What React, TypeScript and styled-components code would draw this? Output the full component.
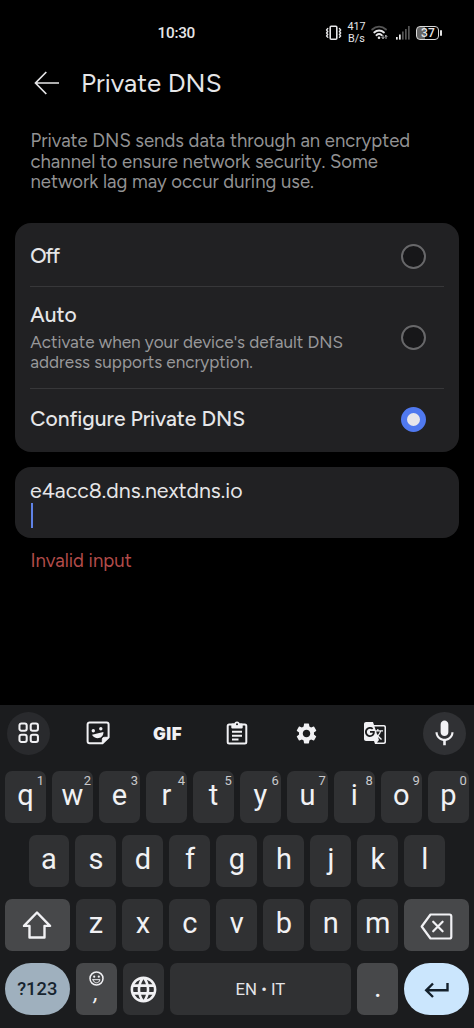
import React from 'react';
import styled, { createGlobalStyle } from 'styled-components';
import { MdGTranslate, MdLanguage, MdMic, MdSettings } from 'react-icons/md';

const Global = createGlobalStyle`
  * { box-sizing: border-box; }
  body { margin: 0; background: #000; }
  svg { display: block; flex: none; }
`;

const ui = `'Figtree', 'Lato', 'Noto Sans', sans-serif`;

const Screen = styled.div`
  width: 474px;
  height: 1028px;
  display: flex;
  flex-direction: column;
  background: #000;
  color: #e6e6e8;
  font-family: ${ui};
  overflow: hidden;
`;

const StatusBar = styled.header`
  height: 60px;
  padding: 5px 32px 0 157.5px;
  display: flex;
  align-items: center;
  font-family: Roboto, sans-serif;
`;

const Clock = styled.span`
  flex: 1;
  font-size: 15.3px;
  font-weight: 500;
  line-height: 20px;
  letter-spacing: -0.25px;
`;

const StatusIcons = styled.div`
  display: flex;
  align-items: center;
`;

const Speed = styled.div`
  width: 18px;
  margin: 0 6px 0 5px;
  font-size: 10.8px;
  line-height: 11.5px;
  text-align: center;
  white-space: nowrap;
`;

const TitleBar = styled.div`
  height: 46px;
  padding-left: 33.5px;
  display: flex;
  align-items: center;
  gap: 21.5px;
`;

const Title = styled.h1`
  margin: 0;
  font-size: 25.8px;
  font-weight: 400;
  line-height: 32px;
  letter-spacing: 0.1px;
`;

const Description = styled.p`
  margin: 25px 0 0 30.5px;
  height: 92px;
  font-size: 18.5px;
  line-height: 20.6px;
  letter-spacing: 0.02px;
  color: #929293;
  white-space: nowrap;
`;

const Card = styled.section`
  margin: 0 15px;
  padding: 0 15px;
  flex: none;
  border-radius: 16px;
  background: #212123;
`;

const Option = styled.div<{ $height: number; $shift?: number }>`
  height: ${p => p.$height}px;
  padding-top: ${p => Math.max(p.$shift || 0, 0)}px;
  padding-bottom: ${p => Math.max(-(p.$shift || 0), 0)}px;
  padding-right: 18px;
  display: flex;
  align-items: center;
  justify-content: space-between;
  & + & { border-top: 1px solid #373739; }
`;

const OptionLabel = styled.div<{ $tight?: boolean }>`
  padding-left: 0.3px;
  font-size: 21px;
  font-weight: 500;
  line-height: 26px;
  letter-spacing: ${p => (p.$tight ? '-1.1px' : 'normal')};
  white-space: nowrap;
`;

const OptionHint = styled.div`
  padding: 4.5px 0 0 0.3px;
  font-size: 17.1px;
  line-height: 19.8px;
  color: #98989a;
  white-space: nowrap;
`;

const Radio = styled.span<{ $on?: boolean }>`
  width: 25px;
  height: 25px;
  flex: none;
  border-radius: 50%;
  border: ${p => (p.$on ? '6.5px solid #5079ef' : '2px solid #68686a')};
  background: ${p => (p.$on ? '#e8e6ea' : '#171719')};
`;

const Field = styled(Card)`
  height: 71px;
  margin-top: 15px;
  padding-top: 11px;
  font-size: 21.3px;
  line-height: 25px;
`;

const Caret = styled.span`
  display: block;
  width: 2px;
  height: 25px;
  margin-left: 0.5px;
  background: #5f82e6;
`;

const ErrorText = styled.p`
  margin: 12px 0 0 30.5px;
  font-size: 18.6px;
  line-height: 22px;
  color: #b34c4a;
`;

const Keyboard = styled.section`
  height: 323px;
  margin-top: auto;
  padding: 6px 5.2px 0 5px;
  flex: none;
  display: flex;
  flex-direction: column;
  gap: 12px;
  background: #1b1c1e;
  color: #f1f1f4;
  font-family: Roboto, sans-serif;
`;

const Toolbar = styled.div`
  height: 48px;
  padding: 0 2.6px 4px 2.4px;
  display: flex;
  align-items: center;
  justify-content: space-between;
`;

const Tool = styled.span<{ $bg?: string }>`
  width: 43px;
  height: 43px;
  border-radius: 50%;
  display: flex;
  align-items: center;
  justify-content: center;
  background: ${p => p.$bg || 'transparent'};
`;

const Gif = styled.span`
  padding-top: 1px;
  font: 900 17px/20px Inter, sans-serif;
  letter-spacing: 0.5px;
`;

const KeyRow = styled.div<{ $inset?: number }>`
  height: 52px;
  padding: 0 ${p => p.$inset || 0}px;
  display: flex;
  gap: 6px;
`;

const Key = styled.div<{ $tone?: string; $width?: number; $pill?: boolean }>`
  position: relative;
  flex: ${p => (p.$width ? `0 0 ${p.$width}px` : '1 1 0')};
  display: flex;
  align-items: center;
  justify-content: center;
  border-radius: ${p => (p.$pill ? 26 : 7)}px;
  background: ${p => p.$tone || '#303133'};
`;

const Letter = styled.span`
  font-size: 29px;
  line-height: 34px;
  padding-bottom: 4px;
`;

const Digit = styled.sup`
  position: absolute;
  top: 3px;
  right: 2px;
  font-size: 13px;
  line-height: 14px;
  color: #c9c9cc;
`;

const KeyLabel = styled.span<{ $dark?: boolean }>`
  font-size: ${p => (p.$dark ? 18.3 : 16.8)}px;
  font-weight: ${p => (p.$dark ? 500 : 400)};
  line-height: 22px;
  color: ${p => (p.$dark ? '#17242f' : '#e4e4e7')};
`;

const Stack = styled.div`
  height: 100%;
  padding-top: 8px;
  display: flex;
  flex-direction: column;
  align-items: center;
`;

const Mark = styled.span`
  font-size: 22px;
  font-style: italic;
  line-height: 14px;
`;

const stroke = { fill: 'none', stroke: 'currentColor', strokeLinecap: 'round', strokeLinejoin: 'round' } as const;

const VibrateIcon = () => (
  <svg width="17" height="16" viewBox="0 0 17 16" {...stroke} strokeWidth="1.3">
    <rect x="5.2" y="1.3" width="6.6" height="13" rx="1" strokeWidth="1.6" />
    <path d="M2.8 3.5 1.5 5l1.3 1.5L1.5 8l1.3 1.5L1.5 11l1.3 1.2M14.4 3.5 15.7 5l-1.3 1.5L15.7 8l-1.3 1.5 1.3 1.5-1.3 1.2" />
  </svg>
);

const WifiIcon = () => (
  <svg width="17" height="15" viewBox="0 0 17 15" {...stroke} strokeWidth="1.8">
    <path d="M1.2 4.5C5.2.6 11 .6 15 4.5" stroke="#555" />
    <path d="M3.2 7.5c2.8-2.7 7-2.7 9.8 0M5.4 10.2c1.6-1.4 3.8-1.4 5.4 0" />
    <circle cx="8" cy="12.8" r="1.3" fill="currentColor" stroke="none" />
    <path d="M12 10.5v3m-1-1 1 1 1-1M15 13.5v-3m-1 1 1-1 1 1" strokeWidth=".8" />
  </svg>
);

const Bars = styled.svg`
  margin: 0 6px 0 8px;
`;

const SignalIcon = () => (
  <Bars width="14" height="14" viewBox="0 0 14 14" fill="#555">
    <rect x="0" y="11" width="1.7" height="2.6" fill="#eee" />
    <rect x="3" y="8.5" width="1.7" height="5.1" fill="#eee" />
    <rect x="6" y="5.5" width="1.7" height="8.1" />
    <rect x="9" y="3" width="1.7" height="10.6" />
    <rect x="12" y="0" width="1.7" height="13.6" />
  </Bars>
);

const Battery = styled.span`
  width: 23px;
  height: 14px;
  display: flex;
  align-items: center;
  justify-content: center;
  border: 1.4px solid #d8d8d8;
  border-radius: 4px;
  background: linear-gradient(90deg, #666 37%, #000 37%);
  font: 500 12px/12px Roboto, sans-serif;
`;

const BatteryTip = styled.span`
  width: 1.6px;
  height: 6px;
  margin-left: 1px;
  border-radius: 1px;
  background: #e2e2e2;
`;

const BackIcon = () => (
  <svg width="26" height="26" viewBox="0 0 26 26" {...stroke} strokeWidth="1.7">
    <path d="M25 13H1.5M12.3 2 1.5 13l10.8 11" strokeLinecap="butt" strokeLinejoin="miter" />
  </svg>
);

const AppsIcon = () => (
  <svg width="21.5" height="21.5" viewBox="0 0 22 22" {...stroke} strokeWidth="2.1">
    {[1.5, 13].map(y => [1.5, 13].map(x => <rect key={`${x}-${y}`} x={x} y={y} width="7.4" height="7.4" rx="2" />))}
  </svg>
);

const StickerIcon = () => (
  <svg width="24" height="24" viewBox="0 0 24 24" {...stroke} strokeWidth="2">
    <path d="M16.5 22.2H3.6a2 2 0 0 1-2-2V3.4a2 2 0 0 1 2-2h17a2 2 0 0 1 2 2v12.8Z" />
    <path d="M16.3 22.2v-3.6a2.3 2.3 0 0 1 2.3-2.3h4Z" fill="currentColor" strokeWidth="1" />
    <path d="M6 13.8 17.4 11c.2 3.2-1.7 5.700-4.600 6.100-2.800.3-5.600-.9-6.800-3.300Z" fill="currentColor" stroke="none" />
    <circle cx="7.3" cy="9.7" r="1.7" fill="currentColor" stroke="none" />
    <circle cx="14.8" cy="7.7" r="1.7" fill="currentColor" stroke="none" />
  </svg>
);

const ClipboardIcon = () => (
  <svg width="22" height="24" viewBox="0 0 22 24" {...stroke} strokeWidth="2">
    <rect x="1.7" y="3.4" width="18.6" height="19" rx="1.5" />
    <path d="M6.3 3.4h9.4v3.1H6.3z" fill="currentColor" />
    <circle cx="11" cy="3.2" r="2.6" fill="currentColor" stroke="none" />
    <circle cx="11" cy="3.2" r="1" fill="#1b1c1e" stroke="none" />
    <path d="M6 10.800h10M6 14.700h10M6 18.500h6.500" strokeLinecap="butt" />
  </svg>
);

const ShiftIcon = () => (
  <svg width="30" height="28" viewBox="0 0 30 28" {...stroke} strokeWidth="2.4">
    <path d="M15 1.500 28 14.900h-5.500v11.600h-15V14.900H2Z" />
  </svg>
);

const BackspaceIcon = () => (
  <svg width="33" height="29" viewBox="0 -2 33 29" {...stroke} strokeWidth="2.2">
    <path d="M10.500 1.500h19a1.800 1.800 0 0 1 1.800 1.800v20.400a1.800 1.800 0 0 1-1.800 1.800h-19L1.700 13.500Z" />
    <path d="m13.200 8.700 9.400 9.600m0-9.600-9.400 9.600" />
  </svg>
);

const SmileIcon = () => (
  <svg width="15" height="15" viewBox="0 0 15 15" {...stroke} strokeWidth="1.5">
    <circle cx="7.5" cy="7.5" r="6.5" />
    <path d="M4 8.700h7c-.5 2-1.800 3.100-3.500 3.100S4.500 10.700 4 8.700Z" strokeWidth="1" />
    <circle cx="5.2" cy="5.7" r="1.1" fill="currentColor" stroke="none" />
    <circle cx="9.8" cy="5.7" r="1.1" fill="currentColor" stroke="none" />
  </svg>
);

const EnterIcon = () => (
  <svg width="26" height="18" viewBox="0 0 26 18" fill="none" stroke="#14202b" strokeWidth="2.4">
    <path d="M23.500 3v7.300H2.500M9 3.500 2.200 10.300 9 17" />
  </svg>
);

const special = '#47484a';

export default function App() {
  return (
    <>
      <Global />
      <Screen>
        <StatusBar>
          <Clock>10:30</Clock>
          <StatusIcons>
            <VibrateIcon />
            <Speed>417<br />B/s</Speed>
            <WifiIcon />
            <SignalIcon />
            <Battery>37</Battery>
            <BatteryTip />
          </StatusIcons>
        </StatusBar>
        <TitleBar>
          <BackIcon />
          <Title>Private DNS</Title>
        </TitleBar>
        <Description>
          Private DNS sends data through an encrypted<br />
          channel to ensure network security. Some<br />
          network lag may occur during use.
        </Description>
        <Card>
          <Option $height={63} $shift={3}>
            <OptionLabel $tight>Off</OptionLabel>
            <Radio />
          </Option>
          <Option $height={102}>
            <div>
              <OptionLabel>Auto</OptionLabel>
              <OptionHint>
                Activate when your device's default DNS<br />
                address supports encryption.
              </OptionHint>
            </div>
            <Radio />
          </Option>
          <Option $height={64} $shift={-3}>
            <OptionLabel>Configure Private DNS</OptionLabel>
            <Radio $on />
          </Option>
        </Card>
        <Field>
          e4acc8.dns.nextdns.io
          <Caret />
        </Field>
        <ErrorText>Invalid input</ErrorText>
        <Keyboard>
          <Toolbar>
            <Tool $bg="#292a2d"><AppsIcon /></Tool>
            <Tool><StickerIcon /></Tool>
            <Tool><Gif>GIF</Gif></Tool>
            <Tool><ClipboardIcon /></Tool>
            <Tool><MdSettings size={25} /></Tool>
            <Tool><MdGTranslate size={24} /></Tool>
            <Tool $bg="#303134"><MdMic size={31} /></Tool>
          </Toolbar>
          <KeyRow>
            {[...'qwertyuiop'].map((c, i) => (
              <Key key={c}><Letter>{c}</Letter><Digit>{(i + 1) % 10}</Digit></Key>
            ))}
          </KeyRow>
          <KeyRow $inset={23.5}>
            {[...'asdfghjkl'].map(c => <Key key={c}><Letter>{c}</Letter></Key>)}
          </KeyRow>
          <KeyRow>
            <Key $width={64.5} $tone={special}><ShiftIcon /></Key>
            {[...'zxcvbnm'].map(c => <Key key={c}><Letter>{c}</Letter></Key>)}
            <Key $width={64.5} $tone={special}><BackspaceIcon /></Key>
          </KeyRow>
          <KeyRow>
            <Key $width={64.5} $tone="#9fb0be" $pill><KeyLabel $dark>?123</KeyLabel></Key>
            <Key $width={41} $tone={special}><Stack><SmileIcon /><Mark>,</Mark></Stack></Key>
            <Key $width={41}><MdLanguage size={31} /></Key>
            <Key><KeyLabel>EN • IT</KeyLabel></Key>
            <Key $width={41} $tone={special}><Letter>.</Letter></Key>
            <Key $width={64.5} $tone="#cbe6fd" $pill><EnterIcon /></Key>
          </KeyRow>
        </Keyboard>
      </Screen>
    </>
  );
}
